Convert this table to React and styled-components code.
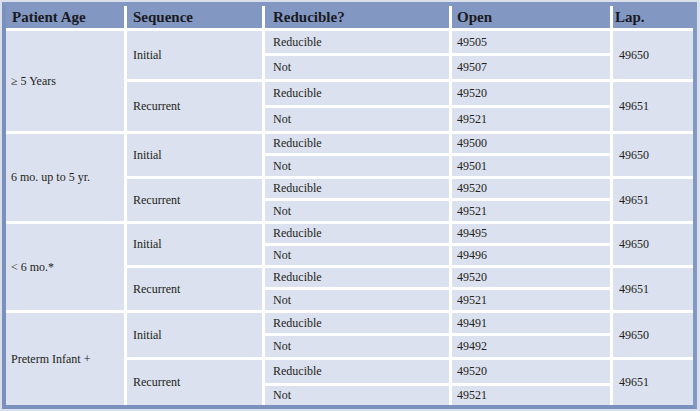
import React from "react";
import styled, { createGlobalStyle } from "styled-components";

const Global = createGlobalStyle`
  html, body { margin: 0; padding: 0; background: #d9e0ec; }
  body { width: 700px; height: 411px; overflow: hidden; }
`;

const Page = styled.div`
  padding: 2px 3px 2px 2px;
  width: 700px;
  height: 411px;
  box-sizing: border-box;
  background: #d9e0ec;
`;

const Frame = styled.div`
  border: 4px solid #8298c2;
  border-left-color: #7b91bd;
  border-bottom-color: #7b91bd;
  background: #ffffff;
  display: grid;
  grid-template-columns: 118px 135px 184px 158px 80px;
  grid-template-rows: ${(p) => p.$rows};
  column-gap: 3px;
  row-gap: 3px;
  font-family: "Liberation Serif", "Times New Roman", serif;
  color: #231f20;
`;

const Head = styled.div`
  background: #8298c2;
  font-weight: bold;
  font-size: 15px;
  display: flex;
  align-items: center;
  padding-left: ${(p) => p.$pad || 6}px;
  padding-top: 1px;
  color: #1a1a22;
`;

const Cell = styled.div`
  background: #dbe1ee;
  font-size: 12px;
  display: flex;
  align-items: center;
  padding-left: ${(p) => p.$pad || 6}px;
  grid-row: span ${(p) => p.$span || 1};
`;

const groups = [
  {
    age: "\u2265 5 Years",
    seq: [
      { name: "Initial", open: ["49505", "49507"], lap: "49650" },
      { name: "Recurrent", open: ["49520", "49521"], lap: "49651" },
    ],
    rows: [22, 23, 23, 23],
  },
  {
    age: "6 mo. up to 5 yr.",
    seq: [
      { name: "Initial", open: ["49500", "49501"], lap: "49650" },
      { name: "Recurrent", open: ["49520", "49521"], lap: "49651" },
    ],
    rows: [19, 20, 19, 20],
  },
  {
    age: "< 6 mo.*",
    seq: [
      { name: "Initial", open: ["49495", "49496"], lap: "49650" },
      { name: "Recurrent", open: ["49520", "49521"], lap: "49651" },
    ],
    rows: [19, 19, 19, 20],
  },
  {
    age: "Preterm Infant +",
    seq: [
      { name: "Initial", open: ["49491", "49492"], lap: "49650" },
      { name: "Recurrent", open: ["49520", "49521"], lap: "49651" },
    ],
    rows: [20, 21, 23, 19],
  },
];

const cols = { age: 5, seq: 6, red: 8, open: 5, lap: 6 };

export default function App() {
  const rowSizes = ["22px", ...groups.flatMap((g) => g.rows.map((r) => r + "px"))].join(" ");
  const cells = [];
  groups.forEach((g, gi) => {
    g.seq.forEach((s, si) => {
      ["Reducible", "Not"].forEach((r, ri) => {
        const k = `${gi}-${si}-${ri}`;
        if (si === 0 && ri === 0) {
          cells.push(
            <Cell key={k + "a"} $span={4} $pad={cols.age}>
              {g.age}
            </Cell>
          );
        }
        if (ri === 0) {
          cells.push(
            <Cell key={k + "s"} $span={2} $pad={cols.seq}>
              {s.name}
            </Cell>
          );
        }
        cells.push(
          <Cell key={k + "r"} $pad={cols.red}>
            {r}
          </Cell>
        );
        cells.push(
          <Cell key={k + "o"} $pad={cols.open}>
            {s.open[ri]}
          </Cell>
        );
        if (ri === 0) {
          cells.push(
            <Cell key={k + "l"} $span={2} $pad={cols.lap}>
              {s.lap}
            </Cell>
          );
        }
      });
    });
  });

  return (
    <Page>
      <Global />
      <Frame $rows={rowSizes}>
        <Head $pad={cols.age + 1}>Patient Age</Head>
        <Head $pad={cols.seq}>Sequence</Head>
        <Head $pad={cols.red}>Reducible?</Head>
        <Head $pad={cols.open}>Open</Head>
        <Head $pad={cols.lap - 4}>Lap.</Head>
        {cells}
      </Frame>
    </Page>
  );
}
